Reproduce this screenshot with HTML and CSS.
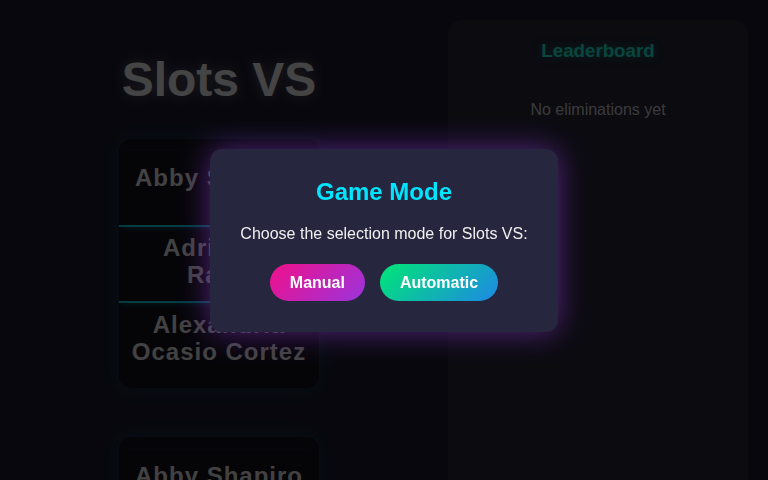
FILE: index.html
```html
<!DOCTYPE html>
<html lang="en">
  <head>
    <meta charset="UTF-8" />
    <meta name="viewport" content="width=device-width, initial-scale=1.0" />
    <title>Slots VS</title>
    <link rel="stylesheet" href="styles.css">
  </head>
  <body>
    <div class="app">
      <main class="arena">
        <h1 class="title">Slots VS</h1>
        <div class="slot">
          <div class="slot-item">Abby Shapiro</div>
          <div class="slot-item">Adrianna Rand</div>
          <div class="slot-item">Alexandria Ocasio Cortez</div>
        </div>
        <div class="slot">
          <div class="slot-item">Abby Shapiro</div>
          <div class="slot-item">Adrianna Rand</div>
          <div class="slot-item">Alexandria Ocasio Cortez</div>
        </div>
      </main>
      <aside class="leaderboard">
        <h3>Leaderboard</h3>
        <p class="empty">No eliminations yet</p>
      </aside>
    </div>

    <div class="overlay">
      <div class="modal">
        <h2>Game Mode</h2>
        <p>Choose the selection mode for Slots VS:</p>
        <div class="modal-buttons">
          <button class="mode-button is-manual">Manual</button>
          <button class="mode-button is-auto">Automatic</button>
        </div>
      </div>
    </div>
  </body>
</html>
```

FILE: styles.css
```css
* {
  box-sizing: border-box;
}
html, body {
  margin: 0;
  height: 100%;
  overflow: hidden;
}
body {
  background: #1a1a2e;
  color: #eee;
  font-family: "Liberation Sans", Arial, sans-serif;
}
.app {
  display: flex;
  gap: 10px;
}
.arena {
  width: 438px;
  flex-shrink: 0;
  padding-top: 20px;
  display: flex;
  flex-direction: column;
  align-items: center;
}
.title {
  font-size: 48px;
  margin: 32px 0;
  color: #e4e4e4;
  text-shadow: 0 0 12px rgba(255, 255, 255, 0.3);
}
.slot {
  width: 200px;
  height: 249px;
  padding: 12px 0 0;
  margin-bottom: 49px;
  background: #12121c;
  border-radius: 12px;
  overflow: hidden;
  box-shadow: 0 0 20px rgba(0, 229, 255, 0.15);
  flex-shrink: 0;
}
.slot-item {
  height: 76px;
  padding: 0 10px 6px;
  display: flex;
  align-items: center;
  justify-content: center;
  text-align: center;
  font-size: 24px;
  font-weight: 700;
  letter-spacing: 1px;
  line-height: 27px;
  color: #dcdcdc;
  border-bottom: 2px solid #00c8d8;
  box-shadow: 0 2px 8px -4px rgba(0, 229, 255, 0.6);
}
.slot-item:first-child {
  padding-bottom: 22px;
}
.slot-item:last-child {
  padding-bottom: 6px;
  border-bottom: none;
  box-shadow: none;
}
.leaderboard {
  width: 300px;
  height: 520px;
  margin-top: 20px;
  padding: 20px;
  background: rgba(255, 255, 255, 0.05);
  border-radius: 15px;
  text-align: center;
}
.leaderboard h3 {
  margin: 0 0 19px;
  color: #1fe8cf;
  text-shadow: 0 0 8px rgba(0, 255, 200, 0.4);
}
.empty {
  margin: 0;
  padding: 20px 0;
  color: #c4c4c4;
}

/* mode picker */
.overlay {
  position: fixed;
  inset: 0;
  background: rgba(0, 0, 0, 0.7);
  display: flex;
  align-items: center;
  justify-content: center;
}
.modal {
  background: #26263e;
  border-radius: 12px;
  padding: 29px 30px 31px;
  text-align: center;
  box-shadow: 0 0 30px rgba(150, 60, 220, 0.55);
}
.modal h2 {
  margin: 0 0 19px;
  font-size: 24px;
  color: #00e5ff;
}
.modal p {
  margin: 0 0 21px;
  font-size: 16px;
  color: #f0f0f0;
}
.modal-buttons {
  display: flex;
  justify-content: center;
  gap: 15px;
}
.mode-button {
  border: none;
  border-radius: 20px;
  padding: 10px 20px;
  height: 37px;
  font: 700 16px "Liberation Sans", Arial, sans-serif;
  color: #fff;
  cursor: pointer;
}
.is-manual {
  background: linear-gradient(135deg, #f0108a, #9a34dc);
}
.is-auto {
  background: linear-gradient(135deg, #00e676, #1e88e5);
}
```
